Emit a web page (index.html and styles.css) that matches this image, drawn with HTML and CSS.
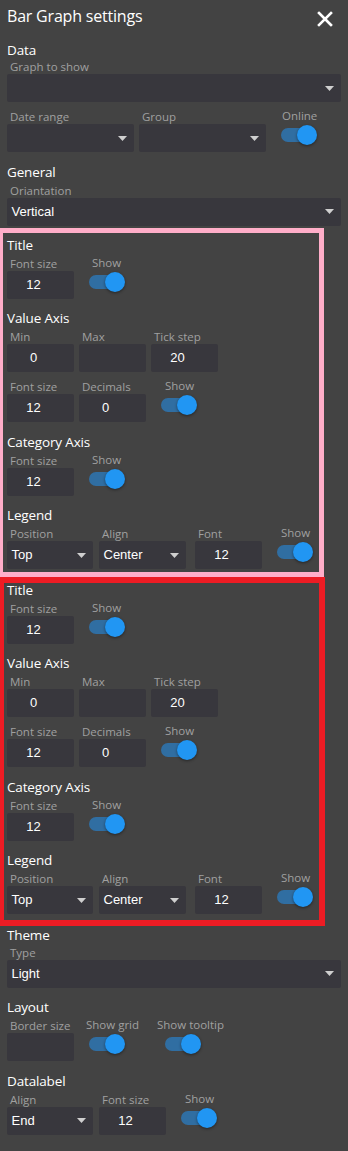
FILE: index.html
```html
<!DOCTYPE html>
<html>
<head>
<meta charset="utf-8">
<link rel="stylesheet" href="styles.css">
</head>
<body>
<div class="panel">
  <div class="header">
    <span class="title">Bar Graph settings</span>
    <svg class="close" width="16" height="16" viewBox="0 0 16 16"><path d="M2 2 L14 14 M14 2 L2 14" stroke="#fff" stroke-width="2.6" stroke-linecap="square"/></svg>
  </div>

  <div class="group">
    <div class="heading h-tight">Data</div>
    <div class="row">
      <div class="field full"><div class="label">Graph to show</div><div class="select"><span></span><svg class="arrow" width="9" height="5" viewBox="0 0 9 5"><polygon points="0,0 9,0 4.5,5"/></svg></div></div>
    </div>
    <div class="row">
      <div class="field w127"><div class="label">Date range</div><div class="select"><span></span><svg class="arrow" width="9" height="5" viewBox="0 0 9 5"><polygon points="0,0 9,0 4.5,5"/></svg></div></div>
      <div class="field w127 ml5"><div class="label">Group</div><div class="select"><span></span><svg class="arrow" width="9" height="5" viewBox="0 0 9 5"><polygon points="0,0 9,0 4.5,5"/></svg></div></div>
      <div class="tfield ml15"><div class="label pl1">Online</div><div class="twrap"><div class="toggle"><div class="knob"></div></div></div></div>
    </div>
  </div>

  <div class="group">
    <div class="heading">General</div>
    <div class="row">
      <div class="field full"><div class="label">Oriantation</div><div class="select"><span>Vertical</span><svg class="arrow" width="9" height="5" viewBox="0 0 9 5"><polygon points="0,0 9,0 4.5,5"/></svg></div></div>
    </div>
  </div>

  <div class="box box-pink">
    <div class="group">
      <div class="heading">Title</div>
      <div class="row">
        <div class="field w67"><div class="label">Font size</div><div class="input">12</div></div>
        <div class="tfield ml15"><div class="label pl3">Show</div><div class="twrap"><div class="toggle"><div class="knob"></div></div></div></div>
      </div>
    </div>
    <div class="group">
      <div class="heading">Value Axis</div>
      <div class="row">
        <div class="field w67"><div class="label">Min</div><div class="input">0</div></div>
        <div class="field w67 ml5"><div class="label">Max</div><div class="input"></div></div>
        <div class="field w67 ml5"><div class="label">Tick step</div><div class="input">20</div></div>
      </div>
      <div class="row">
        <div class="field w67"><div class="label">Font size</div><div class="input">12</div></div>
        <div class="field w67 ml5"><div class="label">Decimals</div><div class="input">0</div></div>
        <div class="tfield ml15"><div class="label pl4">Show</div><div class="twrap"><div class="toggle"><div class="knob"></div></div></div></div>
      </div>
    </div>
    <div class="group">
      <div class="heading">Category Axis</div>
      <div class="row">
        <div class="field w67"><div class="label">Font size</div><div class="input">12</div></div>
        <div class="tfield ml15"><div class="label pl3">Show</div><div class="twrap"><div class="toggle"><div class="knob"></div></div></div></div>
      </div>
    </div>
    <div class="group">
      <div class="heading">Legend</div>
      <div class="row">
        <div class="field w86"><div class="label">Position</div><div class="select"><span>Top</span><svg class="arrow" width="9" height="5" viewBox="0 0 9 5"><polygon points="0,0 9,0 4.5,5"/></svg></div></div>
        <div class="field w87 ml6"><div class="label">Align</div><div class="select"><span>Center</span><svg class="arrow" width="9" height="5" viewBox="0 0 9 5"><polygon points="0,0 9,0 4.5,5"/></svg></div></div>
        <div class="field w67 ml9"><div class="label">Font</div><div class="input">12</div></div>
        <div class="tfield ml15"><div class="label pl4">Show</div><div class="twrap"><div class="toggle"><div class="knob"></div></div></div></div>
      </div>
    </div>
  </div>

  <div class="box box-red">
    <div class="group">
      <div class="heading">Title</div>
      <div class="row">
        <div class="field w67"><div class="label">Font size</div><div class="input">12</div></div>
        <div class="tfield ml15"><div class="label pl3">Show</div><div class="twrap"><div class="toggle"><div class="knob"></div></div></div></div>
      </div>
    </div>
    <div class="group">
      <div class="heading">Value Axis</div>
      <div class="row">
        <div class="field w67"><div class="label">Min</div><div class="input">0</div></div>
        <div class="field w67 ml5"><div class="label">Max</div><div class="input"></div></div>
        <div class="field w67 ml5"><div class="label">Tick step</div><div class="input">20</div></div>
      </div>
      <div class="row">
        <div class="field w67"><div class="label">Font size</div><div class="input">12</div></div>
        <div class="field w67 ml5"><div class="label">Decimals</div><div class="input">0</div></div>
        <div class="tfield ml15"><div class="label pl4">Show</div><div class="twrap"><div class="toggle"><div class="knob"></div></div></div></div>
      </div>
    </div>
    <div class="group">
      <div class="heading">Category Axis</div>
      <div class="row">
        <div class="field w67"><div class="label">Font size</div><div class="input">12</div></div>
        <div class="tfield ml15"><div class="label pl3">Show</div><div class="twrap"><div class="toggle"><div class="knob"></div></div></div></div>
      </div>
    </div>
    <div class="group">
      <div class="heading">Legend</div>
      <div class="row">
        <div class="field w86"><div class="label">Position</div><div class="select"><span>Top</span><svg class="arrow" width="9" height="5" viewBox="0 0 9 5"><polygon points="0,0 9,0 4.5,5"/></svg></div></div>
        <div class="field w87 ml6"><div class="label">Align</div><div class="select"><span>Center</span><svg class="arrow" width="9" height="5" viewBox="0 0 9 5"><polygon points="0,0 9,0 4.5,5"/></svg></div></div>
        <div class="field w67 ml9"><div class="label">Font</div><div class="input">12</div></div>
        <div class="tfield ml15"><div class="label pl4">Show</div><div class="twrap"><div class="toggle"><div class="knob"></div></div></div></div>
      </div>
    </div>
  </div>

  <div class="group g-after-box">
    <div class="heading h-theme">Theme</div>
    <div class="row">
      <div class="field full"><div class="label">Type</div><div class="select"><span>Light</span><svg class="arrow" width="9" height="5" viewBox="0 0 9 5"><polygon points="0,0 9,0 4.5,5"/></svg></div></div>
    </div>
  </div>

  <div class="group">
    <div class="heading">Layout</div>
    <div class="row">
      <div class="field w67"><div class="label">Border size</div><div class="input"></div></div>
      <div class="tfield tf-grid"><div class="label">Show grid</div><div class="twrap"><div class="toggle tm3"><div class="knob"></div></div></div></div>
      <div class="tfield tf-tip"><div class="label">Show tooltip</div><div class="twrap"><div class="toggle tm8"><div class="knob"></div></div></div></div>
    </div>
  </div>

  <div class="group">
    <div class="heading">Datalabel</div>
    <div class="row">
      <div class="field w86"><div class="label">Align</div><div class="select"><span>End</span><svg class="arrow" width="9" height="5" viewBox="0 0 9 5"><polygon points="0,0 9,0 4.5,5"/></svg></div></div>
      <div class="field w67 ml6"><div class="label">Font size</div><div class="input">12</div></div>
      <div class="tfield ml15"><div class="label pl4">Show</div><div class="twrap"><div class="toggle"><div class="knob"></div></div></div></div>
    </div>
  </div>
</div>
</body>
</html>
```

FILE: styles.css
```css
html, body {
  margin: 0;
  padding: 0;
  background: #434343;
}
body {
  width: 348px;
  height: 1151px;
  overflow: hidden;
  font-family: "Open Sans", "Noto Sans", sans-serif;
  color: #f4f4f4;
}
.panel {
  padding: 0 7px;
  display: flex;
  flex-direction: column;
}
.header {
  display: flex;
  justify-content: space-between;
  align-items: flex-start;
  padding-top: 5px;
  margin-bottom: 14px;
}
.title {
  font-size: 16px;
  line-height: 22px;
  height: 22px;
  letter-spacing: -0.2px;
  color: #ffffff;
}
.close {
  margin-top: 5.5px;
  margin-right: 8px;
}
.group {
  display: flex;
  flex-direction: column;
}
.group + .group {
  margin-top: 10.5px;
}
.heading {
  font-size: 13.5px;
  line-height: 18px;
  height: 18px;
  letter-spacing: -0.15px;
  color: #ffffff;
  margin-bottom: 2px;
  white-space: nowrap;
}
.h-tight {
  margin-bottom: 0;
}
.h-theme {
  margin-bottom: 1px;
}
.row {
  display: flex;
  align-items: flex-start;
}
.row + .row {
  margin-top: 7px;
}
.field {
  display: flex;
  flex-direction: column;
}
.full { flex: 1; }
.w67 { width: 67px; }
.w86 { width: 86px; }
.w87 { width: 87px; }
.w127 { width: 127px; }
.ml5 { margin-left: 5px; }
.ml6 { margin-left: 6px; }
.ml9 { margin-left: 9px; }
.ml15 { margin-left: 15px; }
.label {
  font-size: 11.5px;
  line-height: 15px;
  height: 15px;
  color: #a0a0a0;
  padding-left: 3px;
  white-space: nowrap;
}
.pl1 { padding-left: 1px; }
.pl3 { padding-left: 3px; }
.pl4 { padding-left: 4px; }
.select, .input {
  height: 28px;
  background: #38373d;
  border-radius: 2px;
  font-family: "Liberation Sans", Arial, sans-serif;
  font-size: 13px;
  line-height: 28px;
  color: #ffffff;
  box-sizing: border-box;
}
.select {
  display: flex;
  justify-content: space-between;
  align-items: center;
  padding-left: 4.5px;
}
.arrow {
  margin-right: 7px;
  fill: #cfcfcf;
  flex: none;
}
.input {
  text-align: center;
  padding-right: 14px;
}
.tfield {
  display: flex;
  flex-direction: column;
  margin-top: -1px;
}
.twrap {
  height: 28px;
}
.toggle {
  position: relative;
  width: 34px;
  height: 14px;
  margin-top: 5px;
  border-radius: 7px;
  background: #306ea2;
}
.knob {
  position: absolute;
  top: -3px;
  right: -2px;
  width: 20px;
  height: 20px;
  border-radius: 50%;
  background: #2196f3;
  box-shadow: 0 1px 3px rgba(0, 0, 0, 0.45);
}
.tf-grid {
  margin-left: 12px;
  width: 64px;
}
.tf-grid .label, .tf-tip .label {
  padding-left: 0;
}
.tf-tip {
  margin-left: 7px;
}
.tm3 { margin-left: 3px; }
.tm8 { margin-left: 8px; }
.box {
  box-sizing: border-box;
  margin-left: -9px;
}
.box-pink {
  width: 326px;
  margin-top: 2px;
  border: 5px solid #ffaec9;
  padding: 3px 0 3px 4px;
}
.box-red {
  width: 327px;
  border: 6px solid #ed1c24;
  padding: 0 0 5.5px 3px;
}
.box-red > .group:first-child {
  margin-top: -2.5px;
}
```
